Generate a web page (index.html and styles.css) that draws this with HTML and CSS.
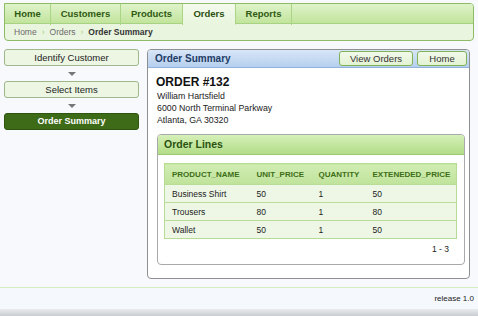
FILE: index.html
```html
<!DOCTYPE html>
<html lang="en">
  <head>
    <meta charset="UTF-8" />
    <title>Order Summary</title>
    <link rel="stylesheet" href="styles.css">
  </head>
  <body>
    <div class="header">
      <div class="tabs">
        <div class="tab">Home</div>
        <div class="tab">Customers</div>
        <div class="tab">Products</div>
        <div class="tab active">Orders</div>
        <div class="tab">Reports</div>
        <div class="tab-rest"></div>
      </div>
      <div class="crumbs">
        <span>Home</span><span class="sep">&rsaquo;</span><span>Orders</span><span class="sep">&rsaquo;</span><b>Order Summary</b>
      </div>
    </div>

    <div class="content">
      <div class="steps">
        <div class="step">Identify Customer</div>
        <div class="arrow"></div>
        <div class="step">Select Items</div>
        <div class="arrow"></div>
        <div class="step current">Order Summary</div>
      </div>

      <div class="panel">
        <div class="panel-head">
          <span class="panel-title">Order Summary</span>
          <div class="panel-buttons">
            <button class="btn btn-wide">View Orders</button>
            <button class="btn">Home</button>
          </div>
        </div>
        <div class="panel-body">
          <div class="order-no">ORDER #132</div>
          <div class="addr">William Hartsfield</div>
          <div class="addr">6000 North Terminal Parkway</div>
          <div class="addr">Atlanta, GA 30320</div>

          <div class="region">
            <div class="region-head">Order Lines</div>
            <div class="region-body">
              <table class="lines">
                <thead>
                  <tr>
                    <th class="c1">PRODUCT_NAME</th>
                    <th class="c2">UNIT_PRICE</th>
                    <th class="c3">QUANTITY</th>
                    <th>EXTENEDED_PRICE</th>
                  </tr>
                </thead>
                <tbody>
                  <tr><td>Business Shirt</td><td>50</td><td>1</td><td>50</td></tr>
                  <tr><td>Trousers</td><td>80</td><td>1</td><td>80</td></tr>
                  <tr><td>Wallet</td><td>50</td><td>1</td><td>50</td></tr>
                </tbody>
              </table>
              <div class="pager">1 - 3</div>
            </div>
          </div>
        </div>
      </div>
    </div>

    <div class="footer">release 1.0</div>
    <div class="bottom-bar"></div>
  </body>
</html>
```

FILE: styles.css
```css
* {
  margin: 0;
  padding: 0;
  box-sizing: border-box;
}
body {
  width: 478px;
  height: 316px;
  overflow: hidden;
  background: #f7f9fc;
  font-family: "Liberation Sans", Arial, sans-serif;
  font-size: 9px;
  color: #222;
  display: flex;
  flex-direction: column;
}
.header {
  margin: 3px 4px 0 4px;
  border: 1px solid #8dbb66;
  border-radius: 0 4px 4px 4px;
  overflow: hidden;
  background: #eaf5e0;
}
.tabs {
  display: grid;
  grid-template-columns: 46px 70px 62px 53px 56px 1fr;
  height: 20px;
  background: linear-gradient(#dff3ca, #c2e49c);
  border-bottom: 1px solid #a8d283;
}
.tab {
  border-right: 1px solid #a9d585;
  font-weight: bold;
  font-size: 9.5px;
  color: #2f5a12;
  text-align: center;
  line-height: 20px;
}
.tab.active {
  background: linear-gradient(#f4faee, #e9f5de);
  color: #2a4f10;
  border-bottom: 1px solid #eaf5e0;
  height: 21px;
}
.crumbs {
  height: 16px;
  line-height: 16px;
  padding-left: 9px;
  font-size: 8.5px;
  color: #6a6a6a;
}
.crumbs .sep {
  color: #a4cf7e;
  margin: 0 5px;
}
.crumbs b {
  color: #333;
}
.content {
  display: flex;
  gap: 8px;
  margin: 8px 8px 0 4px;
  align-items: flex-start;
}
.steps {
  width: 135px;
  display: flex;
  flex-direction: column;
}
.step {
  height: 17px;
  line-height: 15px;
  text-align: center;
  font-size: 9.5px;
  background: #ecf6e3;
  border: 1px solid #9fb78a;
  border-radius: 3px;
  color: #222;
}
.step.current {
  background: #3d6b18;
  border-color: #2f5611;
  color: #fff;
  font-weight: bold;
  font-size: 9px;
}
.arrow {
  height: 15px;
  display: flex;
  justify-content: center;
  align-items: center;
}
.arrow::before {
  content: "";
  border-left: 4px solid transparent;
  border-right: 4px solid transparent;
  border-top: 4px solid #777;
}
.panel {
  width: 323px;
  border: 1px solid #8f8f8f;
  border-radius: 4px;
  background: #fff;
  overflow: hidden;
}
.panel-head {
  height: 18px;
  display: flex;
  align-items: center;
  justify-content: space-between;
  padding: 0 2px 0 7px;
  background: linear-gradient(#d8e6f7, #b5cfee);
  border-bottom: 1px solid #93b3dc;
}
.panel-title {
  font-weight: bold;
  font-size: 10px;
  color: #1e3c66;
}
.panel-buttons {
  display: flex;
  gap: 4px;
}
.btn {
  height: 15px;
  width: 50px;
  font-family: inherit;
  font-size: 9.5px;
  color: #333;
  background: linear-gradient(#f2f9ea, #e3f2d3);
  border: 1px solid #80b257;
  border-radius: 3px;
}
.btn-wide {
  width: 74px;
}
.panel-body {
  padding: 6px 4px 13px 9px;
}
.order-no {
  font-size: 12px;
  font-weight: bold;
  color: #111;
  margin-left: -1px;
  line-height: 16px;
}
.addr {
  line-height: 12px;
  font-size: 8.8px;
  color: #222;
}
.region {
  margin-top: 8px;
  border: 1px solid #a9a9a9;
  border-radius: 4px;
  overflow: hidden;
}
.region-head {
  height: 20px;
  line-height: 19px;
  padding-left: 6px;
  font-weight: bold;
  font-size: 10.5px;
  color: #2b5210;
  background: linear-gradient(#d5f0b8, #b2dd88);
  border-bottom: 1px solid #9cc874;
}
.region-body {
  padding: 8px 7px 10px 6px;
}
.lines {
  width: 100%;
  table-layout: fixed;
  border-collapse: collapse;
  border: 1px solid #b6dc93;
}
.lines th {
  height: 21px;
  text-align: left;
  padding-left: 7px;
  font-size: 8px;
  font-weight: bold;
  color: #3d6e16;
  background: linear-gradient(#d1edb3, #bfe39b);
  white-space: nowrap;
}
.lines td {
  height: 18px;
  padding-left: 7px;
  font-size: 8.5px;
  background: #eef7e5;
  border-top: 1px solid #b9dd97;
  color: #222;
}
.lines .c1 {
  width: 85px;
}
.lines .c2 {
  width: 62px;
}
.lines .c3 {
  width: 54px;
}
.pager {
  text-align: right;
  font-size: 8.5px;
  padding: 5px 8px 0 0;
}
.footer {
  margin-top: 8px;
  border-top: 1px solid #d4edbf;
  height: 22px;
  line-height: 22px;
  text-align: right;
  padding-right: 4px;
  font-size: 8px;
  color: #222;
  background: #f5f8fc;
}
.bottom-bar {
  flex: 1;
  background: linear-gradient(#e9ebee, #c9ccd0);
}
```
